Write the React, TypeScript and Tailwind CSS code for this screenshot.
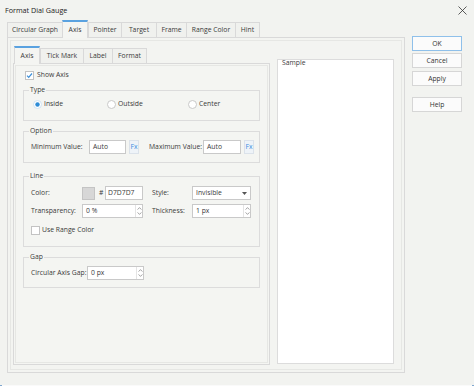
import React from "react";

const Checkbox = ({ checked }: { checked: boolean }) => (
  <svg width="9" height="9" viewBox="0 0 9 9" className="shrink-0">
    <rect x="0.5" y="0.5" width="8" height="8" fill="#fff" stroke="#c3c3c3" />
    {checked && <path d="M2 4.6 L3.7 6.3 L7 2.5" fill="none" stroke="#3d8fd8" strokeWidth="1.2" />}
  </svg>
);

const Radio = ({ checked }: { checked: boolean }) => (
  <svg width="9" height="9" viewBox="0 0 9 9" className="shrink-0">
    <circle cx="4.5" cy="4.5" r="4" fill="#fff" stroke={checked ? "#cfe3f3" : "#c8c8c8"} />
    {checked && <circle cx="4.5" cy="4.5" r="2.2" fill="#2e8cd6" />}
  </svg>
);

const Spin = () => (
  <div className="flex h-full w-[7px] shrink-0 flex-col items-center justify-center gap-[2px] border-l border-[#e4e4e4]">
    <svg width="5" height="3" viewBox="0 0 5 3">
      <path d="M0.6 2.6 L2.5 0.6 L4.4 2.6" fill="none" stroke="#8c8c8c" strokeWidth="0.8" />
    </svg>
    <svg width="5" height="3" viewBox="0 0 5 3">
      <path d="M0.6 0.4 L2.5 2.4 L4.4 0.4" fill="none" stroke="#8c8c8c" strokeWidth="0.8" />
    </svg>
  </div>
);

const Fx = () => (
  <div className="ml-[3px] flex h-[14px] w-[10px] shrink-0 items-center justify-center border border-[#dbe2ea] bg-[#eef3f8] text-[6.8px] text-[#3a8ee0]">
    Fx
  </div>
);

const GroupLabel = ({ children }: { children: React.ReactNode }) => (
  <span className="-mt-[6px] ml-[5px] self-start bg-[#f4f5f2] px-[1px] leading-[10px]">{children}</span>
);

const outerTabs: { label: string; w: string; sel?: boolean }[] = [
  { label: "Circular Graph", w: "w-[55px]" },
  { label: "Axis", w: "w-[26px]", sel: true },
  { label: "Pointer", w: "w-[33px]" },
  { label: "Target", w: "w-[35px]" },
  { label: "Frame", w: "w-[30px]" },
  { label: "Range Color", w: "w-[49px]" },
  { label: "Hint", w: "w-[25px]" },
];

const innerTabs: { label: string; w: string; sel?: boolean }[] = [
  { label: "Axis", w: "w-[26px]", sel: true },
  { label: "Tick Mark", w: "w-[43px]" },
  { label: "Label", w: "w-[29px]" },
  { label: "Format", w: "w-[35px]" },
];

const Tab = ({ label, w, sel, last }: { label: string; w: string; sel?: boolean; last?: boolean }) =>
  sel ? (
    <div
      className={`${w} relative z-10 -mb-px flex h-[18px] shrink-0 items-center justify-center whitespace-nowrap border-x border-t-2 border-x-[#d9d9d9] border-t-[#5aa2e0] bg-[#f4f5f2] pb-px`}
    >
      {label}
    </div>
  ) : (
    <div
      className={`${w} flex h-[15px] shrink-0 items-center justify-center whitespace-nowrap border-t border-l border-[#d9d9d9] bg-[#f0f1ee] ${last ? "border-r" : ""}`}
    >
      {label}
    </div>
  );

const Btn = ({ label, primary }: { label: string; primary?: boolean }) => (
  <div
    className={`flex h-[15px] w-[50px] items-center justify-center border bg-[#fbfbfb] text-[6.8px] text-[#333] ${
      primary ? "border-[#8fc0ea]" : "border-[#d6d6d6]"
    }`}
  >
    {label}
  </div>
);

const Label = ({ w, ml, children }: { w: string; ml?: string; children: React.ReactNode }) => (
  <span className={`${w} ${ml ?? ""} shrink-0 whitespace-nowrap`}>{children}</span>
);

export default function App() {
  return (
    <div className="flex h-[386px] w-[474px] flex-col overflow-hidden bg-[#f2f3f0] font-['Open_Sans','Noto_Sans',sans-serif] text-[6.8px] leading-[10px] text-[#3a3a3a]">
      {/* title bar */}
      <div className="flex h-[20px] items-center justify-between pl-[5px] pr-[7px]">
        <span className="text-[7.2px] text-[#222]">Format Dial Gauge</span>
        <svg width="9" height="9" viewBox="0 0 9 9">
          <path d="M0.5 0.5 L8.5 8.5 M8.5 0.5 L0.5 8.5" stroke="#333" strokeWidth="0.8" />
        </svg>
      </div>

      <div className="flex items-start">
        {/* tab control */}
        <div className="ml-[7px] flex flex-col">
          <div className="flex h-[17px] items-end">
            {outerTabs.map((t, i) => (
              <Tab key={t.label} {...t} last={i === outerTabs.length - 1} />
            ))}
          </div>
          <div className="flex h-[336px] w-[398px] items-start border border-[#d9d9d9] bg-[#f3f4f1] pl-[5px] shadow-[inset_0_0_0_2px_#f3f4f1,inset_0_0_0_3px_#e6e7e4]">
            {/* inner tab control */}
            <div className="mt-[8px] flex flex-col">
              <div className="ml-px flex h-[17px] items-end">
                {innerTabs.map((t, i) => (
                  <Tab key={t.label} {...t} last={i === innerTabs.length - 1} />
                ))}
              </div>
              <div className="flex h-[302px] w-[257px] flex-col border border-[#d9d9d9] bg-[#f4f5f2] shadow-[inset_0_0_0_1px_#f4f5f2,inset_0_0_0_2px_#e6e7e4]">
                {/* show axis */}
                <div className="ml-[11px] mt-[6px] flex h-[10px] items-center gap-[3px]">
                  <Checkbox checked />
                  <span>Show Axis</span>
                </div>

                {/* Type */}
                <div className="ml-[9px] mt-[10px] flex h-[31px] w-[237px] flex-col border border-[#dcdcdc]">
                  <GroupLabel>Type</GroupLabel>
                  <div className="ml-[9px] mt-[4px] flex h-[10px] items-center">
                    <div className="flex w-[74px] items-center gap-[2px]">
                      <Radio checked />
                      <span>Inside</span>
                    </div>
                    <div className="flex w-[81px] items-center gap-[2px]">
                      <Radio checked={false} />
                      <span>Outside</span>
                    </div>
                    <div className="flex items-center gap-[2px]">
                      <Radio checked={false} />
                      <span>Center</span>
                    </div>
                  </div>
                </div>

                {/* Option */}
                <div className="ml-[9px] mt-[10px] flex h-[32px] w-[237px] flex-col border border-[#dcdcdc]">
                  <GroupLabel>Option</GroupLabel>
                  <div className="ml-[7px] mt-[4px] flex h-[14px] items-center">
                    <Label w="w-[58px]">Minimum Value:</Label>
                    <div className="flex h-[14px] w-[37px] shrink-0 items-center border border-[#c9c9c9] bg-white pl-[3px]">Auto</div>
                    <Fx />
                    <Label w="w-[54px]" ml="ml-[10px]">Maximum Value:</Label>
                    <div className="flex h-[14px] w-[38px] shrink-0 items-center border border-[#c9c9c9] bg-white pl-[3px]">Auto</div>
                    <Fx />
                  </div>
                </div>

                {/* Line */}
                <div className="ml-[9px] mt-[13px] flex h-[71px] w-[237px] flex-col border border-[#dcdcdc]">
                  <GroupLabel>Line</GroupLabel>
                  <div className="ml-[7px] mt-[5px] flex h-[14px] items-center">
                    <Label w="w-[51px]">Color:</Label>
                    <div className="h-[13px] w-[13px] shrink-0 border border-[#c4c4c4] bg-[#d7d7d7]" />
                    <Label w="w-[6px]" ml="ml-[4px]">#</Label>
                    <div className="flex h-[14px] w-[38px] shrink-0 items-center border border-[#c9c9c9] bg-white pl-[2px]">D7D7D7</div>
                    <Label w="w-[40px]" ml="ml-[9px]">Style:</Label>
                    <div className="flex h-[14px] w-[59px] shrink-0 items-center justify-between border border-[#c9c9c9] bg-white pl-[3px] pr-[3px]">
                      <span>Invisible</span>
                      <svg width="5" height="3" viewBox="0 0 5 3">
                        <path d="M0 0 L5 0 L2.5 3 Z" fill="#555" />
                      </svg>
                    </div>
                  </div>
                  <div className="ml-[7px] mt-[4px] flex h-[14px] items-center">
                    <Label w="w-[51px]">Transparency:</Label>
                    <div className="flex h-[14px] w-[61px] shrink-0 items-center justify-between border border-[#c9c9c9] bg-white pl-[3px]">
                      <span>0 %</span>
                      <Spin />
                    </div>
                    <Label w="w-[40px]" ml="ml-[9px]">Thickness:</Label>
                    <div className="flex h-[14px] w-[59px] shrink-0 items-center justify-between border border-[#c9c9c9] bg-white pl-[3px]">
                      <span>1 px</span>
                      <Spin />
                    </div>
                  </div>
                  <div className="ml-[7px] mt-[7px] flex h-[10px] items-center gap-[2px]">
                    <Checkbox checked={false} />
                    <span>Use Range Color</span>
                  </div>
                </div>

                {/* Gap */}
                <div className="ml-[9px] mt-[10px] flex h-[31px] w-[237px] flex-col border border-[#dcdcdc]">
                  <GroupLabel>Gap</GroupLabel>
                  <div className="ml-[7px] mt-[4px] flex h-[14px] items-center">
                    <Label w="w-[56px]">Circular Axis Gap:</Label>
                    <div className="flex h-[14px] w-[57px] shrink-0 items-center justify-between border border-[#c9c9c9] bg-white pl-[3px]">
                      <span>0 px</span>
                      <Spin />
                    </div>
                  </div>
                </div>
              </div>
            </div>

            {/* Sample */}
            <div className="ml-[7px] mt-[21px] flex h-[305px] w-[117px] flex-col border border-[#dcdcdc] bg-white">
              <span className="-mt-[2px] ml-[4px] leading-[10px]">Sample</span>
            </div>
          </div>
        </div>

        {/* buttons */}
        <div className="ml-[7px] flex flex-col pt-[16px]">
          <Btn label="OK" primary />
          <div className="mt-[2px]">
            <Btn label="Cancel" />
          </div>
          <div className="mt-[3px]">
            <Btn label="Apply" />
          </div>
          <div className="mt-[11px]">
            <Btn label="Help" />
          </div>
        </div>
      </div>

      <div className="mt-auto flex h-[1px] justify-between bg-[#fafafa]">
        <div className="w-[2px] bg-[#7fa7d0]" />
        <div className="w-[2px] bg-[#7fa7d0]" />
      </div>
    </div>
  );
}
